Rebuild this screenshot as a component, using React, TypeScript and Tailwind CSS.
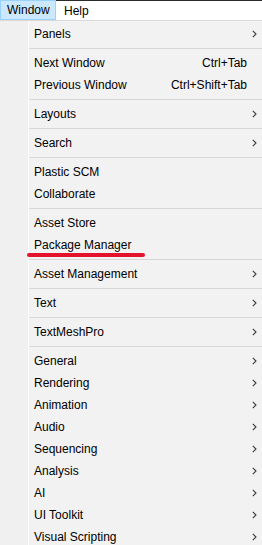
import React from "react";

type Item =
  | { type: "sep" }
  | { type: "item"; label: string; shortcut?: string; sub?: boolean; mark?: boolean };

const items: Item[] = [
  { type: "item", label: "Panels", sub: true },
  { type: "sep" },
  { type: "item", label: "Next Window", shortcut: "Ctrl+Tab" },
  { type: "item", label: "Previous Window", shortcut: "Ctrl+Shift+Tab" },
  { type: "sep" },
  { type: "item", label: "Layouts", sub: true },
  { type: "sep" },
  { type: "item", label: "Search", sub: true },
  { type: "sep" },
  { type: "item", label: "Plastic SCM" },
  { type: "item", label: "Collaborate" },
  { type: "sep" },
  { type: "item", label: "Asset Store" },
  { type: "item", label: "Package Manager", mark: true },
  { type: "sep" },
  { type: "item", label: "Asset Management", sub: true },
  { type: "sep" },
  { type: "item", label: "Text", sub: true },
  { type: "sep" },
  { type: "item", label: "TextMeshPro", sub: true },
  { type: "sep" },
  { type: "item", label: "General", sub: true },
  { type: "item", label: "Rendering", sub: true },
  { type: "item", label: "Animation", sub: true },
  { type: "item", label: "Audio", sub: true },
  { type: "item", label: "Sequencing", sub: true },
  { type: "item", label: "Analysis", sub: true },
  { type: "item", label: "AI", sub: true },
  { type: "item", label: "UI Toolkit", sub: true },
  { type: "item", label: "Visual Scripting", sub: true },
];

function Chevron() {
  return (
    <svg width="5" height="8" viewBox="0 0 5 8" className="block">
      <path d="M0.8 0.8 L4 4 L0.8 7.2" fill="none" stroke="#3c3c3c" strokeWidth="1.1" />
    </svg>
  );
}

export default function App() {
  return (
    <div
      className="w-[262px] h-[545px] overflow-hidden bg-[#f2f2f2] text-[12px] text-black"
      style={{ fontFamily: '"Liberation Sans", Arial, sans-serif' }}
    >
      {/* menu bar */}
      <div className="relative h-[20px] bg-white flex items-stretch border-t border-[#2b2b2b]">
        <div className="-mt-px h-[20px] px-[6px] flex items-center bg-[#cce8ff] border border-[#99d1ff] w-[56px]">
          Window
        </div>
        <div className="flex items-center pl-[8px]">Help</div>
      </div>
      {/* dropdown */}
      <div className="relative flex border-t border-[#d9d9d9] bg-[#f2f2f2]">
        <div className="w-[29px] shrink-0 bg-[#f0f0f0] border-r border-[#fbfbfb]" />
        <div className="flex-1 pt-[2px]">
          {items.map((it, i) =>
            it.type === "sep" ? (
              <div key={i} className="h-[7px] pt-[3px]">
                <div className="h-px bg-[#d7d7d7]" />
              </div>
            ) : (
              <div key={i} className="h-[22px] flex items-center pl-[5px] pr-[5px]">
                <span className="flex-1 whitespace-nowrap">{it.label}</span>
                {it.shortcut && <span className="pr-[10px] whitespace-nowrap">{it.shortcut}</span>}
                {it.sub && <Chevron />}
              </div>
            )
          )}
        </div>
        <div className="absolute left-[27px] top-[232px] w-[118px] h-[4px] rounded-full bg-[#e3132c]" />
      </div>
    </div>
  );
}
